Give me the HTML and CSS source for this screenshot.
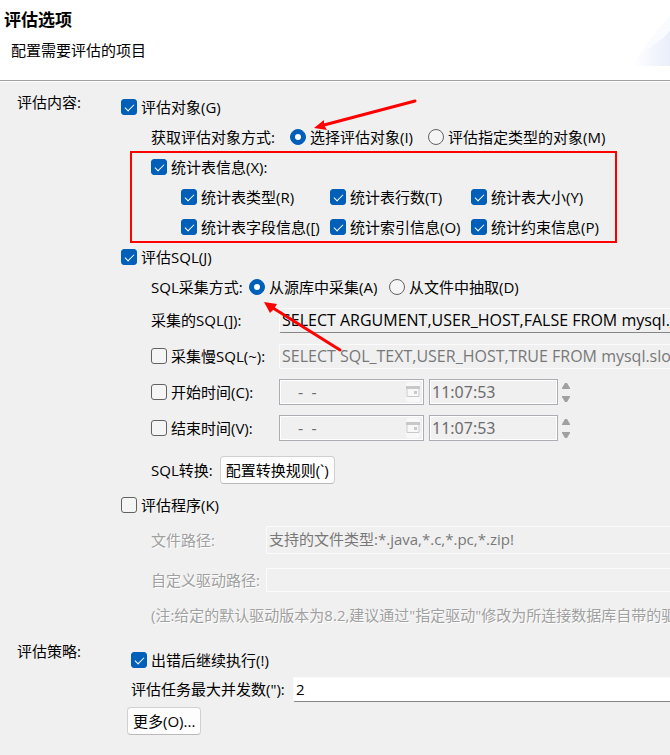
FILE: index.html
```
<!DOCTYPE html>
<html lang="zh-CN">
<head>
<meta charset="utf-8">
<meta name="viewport" content="width=device-width, initial-scale=1">
<title>评估选项</title>
<link rel="stylesheet" href="styles.css">
</head>
<body>
<header class="banner">
    <h1>评估选项</h1>
    <p>配置需要评估的项目</p>
    <svg class="banner-art" width="37" height="50" viewBox="0 0 37 50" aria-hidden="true">
        <defs>
            <linearGradient id="fade">
                <stop offset="0" stop-color="#ffffff"/>
                <stop offset="1" stop-color="#e9eefa"/>
            </linearGradient>
        </defs>
        <path d="M0 50 C8 35 22 16 37 0 V50 Z" fill="#fafbfe"/>
        <path d="M0 50 C10 36 22 28 30 22 Q34 19 37 14 V50 Z" fill="url(#fade)"/>
    </svg>
</header>

<main>
<section class="block">
    <h2>评估内容:</h2>
    <div class="options">
        <div class="row">
            <label class="opt"><input type="checkbox" checked>评估对象(G)</label>
        </div>
        <div class="row sub">
            <span class="caption object-mode">获取评估对象方式:</span>
            <label class="opt first"><input type="radio" name="object" checked>选择评估对象(I)</label>
            <label class="opt"><input type="radio" name="object">评估指定类型的对象(M)</label>
            <svg class="arrow arrow-object" width="104" height="32" viewBox="0 0 104 32" aria-hidden="true">
                <path d="M101 2 L10 26" stroke="#f00" stroke-width="3" stroke-linecap="round"/>
                <path d="M0 29 L10 21 L10 26 L13 31 Z" fill="#f00"/>
            </svg>
        </div>

        <div class="marked">
            <div class="row">
                <label class="opt"><input type="checkbox" checked>统计表信息(X):</label>
            </div>
            <div class="stats">
                <label class="opt"><input type="checkbox" checked>统计表类型(R)</label>
                <label class="opt"><input type="checkbox" checked>统计表行数(T)</label>
                <label class="opt"><input type="checkbox" checked>统计表大小(Y)</label>
                <label class="opt"><input type="checkbox" checked>统计表字段信息([)</label>
                <label class="opt"><input type="checkbox" checked>统计索引信息(O)</label>
                <label class="opt"><input type="checkbox" checked>统计约束信息(P)</label>
            </div>
        </div>

        <div class="row">
            <label class="opt"><input type="checkbox" checked>评估SQL(J)</label>
        </div>
        <div class="row sub">
            <span class="caption sql-mode">SQL采集方式:</span>
            <label class="opt second"><input type="radio" name="sql" checked>从源库中采集(A)</label>
            <label class="opt"><input type="radio" name="sql">从文件中抽取(D)</label>
            <svg class="arrow arrow-sql" width="80" height="52" viewBox="0 0 80 52" aria-hidden="true">
                <path d="M76 48 L9 6" stroke="#f00" stroke-width="3" stroke-linecap="round"/>
                <path d="M0 0 L13 2 L10 7 L6 11 Z" fill="#f00"/>
            </svg>
        </div>
        <div class="row sub tall">
            <label class="name" for="sql">采集的SQL(]):</label>
            <input class="field query" id="sql" type="text" value="SELECT ARGUMENT,USER_HOST,FALSE FROM mysql.general_log">
        </div>
        <div class="row sub tall">
            <label class="opt name"><input type="checkbox">采集慢SQL(~):</label>
            <input class="field query" type="text" aria-label="采集慢SQL" value="SELECT SQL_TEXT,USER_HOST,TRUE FROM mysql.slow_log" disabled>
        </div>
        <div class="row sub tall">
            <label class="opt name"><input type="checkbox">开始时间(C):</label>
            <div class="when">
                <div class="date">
                    <input type="text" aria-label="开始日期" value="-  -" disabled>
                    <svg width="14" height="20" viewBox="0 0 14 20" aria-hidden="true">
                        <rect width="14" height="20" rx="3" fill="#f8f8f8"/>
                        <path d="M1 5.500 V14.500 H13 V5.500" fill="none" stroke="#c8c8c8"/>
                        <path d="M0 4 H14 V7 H0 Z M8 9 H11 V12 H8 Z" fill="#c8c8c8"/>
                    </svg>
                </div>
                <input class="time" type="text" aria-label="开始时刻" value="11:07:53" disabled>
                <div class="spin">
                    <button type="button" aria-label="增加" disabled><svg width="8" height="6"><path d="M0 6 V5 L3 0 H5 L8 5 V6 Z"/></svg></button>
                    <button type="button" aria-label="减少" disabled><svg width="8" height="6"><path d="M0 0 V1 L3 6 H5 L8 1 V0 Z"/></svg></button>
                </div>
            </div>
        </div>
        <div class="row sub tall">
            <label class="opt name"><input type="checkbox">结束时间(V):</label>
            <div class="when">
                <div class="date">
                    <input type="text" aria-label="结束日期" value="-  -" disabled>
                    <svg width="14" height="20" viewBox="0 0 14 20" aria-hidden="true">
                        <rect width="14" height="20" rx="3" fill="#f8f8f8"/>
                        <path d="M1 5.500 V14.500 H13 V5.500" fill="none" stroke="#c8c8c8"/>
                        <path d="M0 4 H14 V7 H0 Z M8 9 H11 V12 H8 Z" fill="#c8c8c8"/>
                    </svg>
                </div>
                <input class="time" type="text" aria-label="结束时刻" value="11:07:53" disabled>
                <div class="spin">
                    <button type="button" aria-label="增加" disabled><svg width="8" height="6"><path d="M0 6 V5 L3 0 H5 L8 5 V6 Z"/></svg></button>
                    <button type="button" aria-label="减少" disabled><svg width="8" height="6"><path d="M0 0 V1 L3 6 H5 L8 1 V0 Z"/></svg></button>
                </div>
            </div>
        </div>
        <div class="row sub convert">
            <span class="caption">SQL转换:</span>
            <button class="btn" type="button">配置转换规则(`)</button>
        </div>

        <div class="row">
            <label class="opt"><input type="checkbox">评估程序(K)</label>
        </div>
        <div class="row sub path">
            <label class="name off" for="file">文件路径:</label>
            <input class="field" id="file" type="text" value="支持的文件类型:*.java,*.c,*.pc,*.zip!" disabled>
        </div>
        <div class="row sub path">
            <label class="name off" for="driver">自定义驱动路径:</label>
            <input class="field short" id="driver" type="text" disabled>
        </div>
        <p class="note off">(注:给定的默认驱动版本为8.2,建议通过"指定驱动"修改为所连接数据库自带的驱动)</p>
    </div>
</section>

<section class="block">
    <h2>评估策略:</h2>
    <div class="options policy">
        <div class="row">
            <label class="opt"><input type="checkbox" checked>出错后继续执行(!)</label>
        </div>
        <div class="row limit">
            <label class="name" for="limit">评估任务最大并发数("):</label>
            <input class="field white" id="limit" type="text" value="2">
        </div>
        <button class="btn more" type="button">更多(O)...</button>
    </div>
</section>
</main>
</body>
</html>
```
FILE: styles.css
```
*{
    box-sizing: border-box;
    margin: 0;
    padding: 0;
}
body{
    background: #f0f0f0;
    color: #000;
    font-family: "Open Sans", "Noto Sans CJK SC", sans-serif;
    font-size: 15px;
    line-height: 20px;
    overflow-x: hidden;
}
input, button{
    font: inherit;
    color: inherit;
}

/* banner */
.banner{
    position: relative;
    height: 82px;
    padding: 10px 4px;
    background: #fff;
    border-bottom: 1px solid #fff;
    box-shadow: inset 0 -1px #a0a0a0;
}
.banner h1{
    font-size: 17px;
    line-height: 20px;
}
.banner p{
    padding: 10px 7px;
}
.banner-art{
    position: absolute;
    right: 0;
    top: 16px;
}

/* sections */
.block{
    display: grid;
    grid-template-columns: 104px minmax(0, 1fr);
    padding: 10px 0 4px 17px;
}
.block h2{
    font-size: 15px;
    font-weight: normal;
}
.row{
    position: relative;
    display: flex;
    align-items: center;
    height: 30px;
    white-space: nowrap;
}
.sub{
    padding-left: 30px;
}
.tall{
    height: 36px;
}
.name{
    flex: none;
    width: 128px;
}
.object-mode{
    width: 139px;
}
.sql-mode{
    width: 98px;
}
.first{
    width: 138px;
}
.second{
    width: 140px;
}

/* tick boxes and radios */
.opt{
    display: flex;
    align-items: center;
    gap: 4px;
}
.opt input{
    appearance: none;
    flex: none;
    display: grid;
    place-items: center;
    width: 16px;
    height: 16px;
    border: 1px solid #626262;
    border-radius: 3px;
    background: #f5f5f5;
}
.opt input[type="radio"]{
    border-radius: 50%;
}
.opt input:checked{
    background: #005fb8;
    border-color: #005fb8;
}
.opt input[type="checkbox"]:checked::after{
    content: "";
    width: 8px;
    height: 4px;
    margin-bottom: 2px;
    border: solid #fff;
    border-width: 0 0 1px 1px;
    transform: rotate(-45deg);
}
.opt input[type="radio"]:checked::after{
    content: "";
    width: 6px;
    height: 6px;
    border-radius: 50%;
    background: #fff;
}

/* red marks */
.marked{
    width: 485px;
    margin-left: 10px;
    padding-left: 20px;
    outline: 2px solid #f00;
    outline-offset: -1px;
}
.stats{
    display: grid;
    grid-template-columns: 149px 141px 1fr;
    grid-auto-rows: 30px;
    padding-left: 30px;
    white-space: nowrap;
}
.arrow{
    position: absolute;
    z-index: 1;
    fill: none;
    pointer-events: none;
}
.arrow-object{
    left: 193px;
    top: -23px;
}
.arrow-sql{
    left: 143px;
    top: 30px;
}

/* fields */
.field{
    flex: 1;
    min-width: 0;
    height: 25px;
    padding-left: 2px;
    border: 1px solid #fbfbfb;
    border-right: 0;
    border-bottom-color: #868686;
    border-radius: 2px 0 0 2px;
    background: #f0f0f0;
}
.field:disabled{
    border-bottom-color: #fbfbfb;
    color: #787878;
}
.query{
    font-size: 16px;
}
.white{
    background: #fff;
}
.when{
    display: flex;
    align-items: center;
    gap: 5px;
    color: #6d6d6d;
}
.date, .time{
    height: 26px;
    border: 1px solid #abadb3;
    box-shadow: inset 0 0 0 1px #fff;
    background: #f0f0f0;
}
.date{
    display: flex;
    align-items: center;
    width: 145px;
    padding: 0 3px 0 18px;
}
.date input{
    flex: 1;
    min-width: 0;
    border: 0;
    background: none;
    font-size: 16px;
}
.time{
    width: 129px;
    padding-left: 2px;
    font-family: "Noto Sans", sans-serif;
    font-size: 16px;
}
.spin{
    display: grid;
    gap: 7px;
    margin-left: -1px;
}
.spin button{
    display: block;
    height: 6px;
    border: 0;
    background: none;
}
.spin svg{
    display: block;
    fill: #a0a0a0;
}
.btn{
    height: 28px;
    padding: 0 5px;
    border: 1px solid #d0d0d0;
    border-bottom-color: #bababa;
    border-radius: 4px;
    background: #fdfdfd;
    white-space: nowrap;
}
.convert{
    gap: 7px;
    height: 44px;
    padding-top: 4px;
}

/* program group */
.off{
    color: #a0a0a0;
    text-shadow: 1px 1px #fff;
}
.path{
    height: 40px;
}
.path .name{
    width: 115px;
}
.path .field{
    height: 28px;
    padding-bottom: 4px;
}
.path .short{
    height: 24px;
}
.note{
    padding: 5px 0 2px 30px;
    white-space: nowrap;
}

/* policy */
.policy{
    padding: 4px 0 0 10px;
}
.limit{
    height: 28px;
}
.limit .name{
    width: 162px;
}
.more{
    margin: 4px 0 0 -4px;
}
```
